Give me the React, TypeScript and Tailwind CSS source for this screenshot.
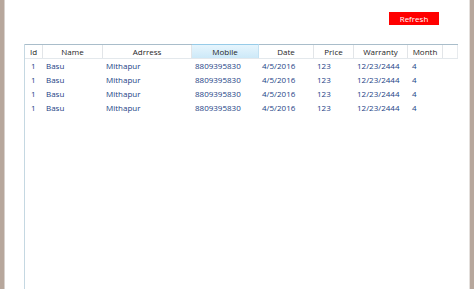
// Order grid window: a Refresh button over a WPF-style data grid.

type Column = {
  key: keyof Row;
  label: string;
  width: string;
};

type Row = {
  id: string;
  name: string;
  address: string;
  mobile: string;
  date: string;
  price: string;
  warranty: string;
  month: string;
};

const COLUMNS: Column[] = [
  { key: "id", label: "Id", width: "w-[18px]" },
  { key: "name", label: "Name", width: "w-[60px]" },
  { key: "address", label: "Adrress", width: "w-[89px]" },
  { key: "mobile", label: "Mobile", width: "w-[67px]" },
  { key: "date", label: "Date", width: "w-[55px]" },
  { key: "price", label: "Price", width: "w-[40px]" },
  { key: "warranty", label: "Warranty", width: "w-[54px]" },
  { key: "month", label: "Month", width: "w-[35px]" },
];

const ROW: Row = {
  id: "1",
  name: "Basu",
  address: "Mithapur",
  mobile: "8809395830",
  date: "4/5/2016",
  price: "123",
  warranty: "12/23/2444",
  month: "4",
};

const ROWS: Row[] = [ROW, ROW, ROW, ROW];

export default function App() {
  return (
    <div
      className="flex h-[289px] w-[474px] bg-[#b7a79c]"
      style={{ fontFamily: '"Open Sans", "Noto Sans", sans-serif' }}
    >
      <div className="ml-[4px] w-px bg-[#d8d2ce]" />
      <div className="flex flex-1 flex-col bg-white">
        {/* Toolbar */}
        <div className="flex h-[44px] items-start justify-end pr-[30px] pt-[12px]">
          <button className="flex h-[13px] w-[50px] items-center justify-center bg-[#ff0000] text-[8px] leading-none text-white">
            Refresh
          </button>
        </div>

        {/* Grid */}
        <div className="ml-[19px] mr-[11px] flex flex-1 flex-col border-l border-[#c5d8e2]">
          <div className="flex h-[15px] border-y border-t-[#a9bdca] border-b-[#e3e8ec] text-[8px] text-[#1e1e1e]">
            {COLUMNS.map((col) => (
              <div
                key={col.key}
                className={
                  col.key === "mobile"
                    ? `${col.width} flex items-center justify-center border-r border-[#c3e2f3] bg-gradient-to-b from-[#e6f5fd] to-[#cde9f8] border-t border-t-[#96cbe8] -mt-px`
                    : `${col.width} flex items-center justify-center border-r border-[#e2e5e8]`
                }
              >
                {col.label}
              </div>
            ))}
            <div className="w-[15px] border-r border-[#e8ebee]" />
          </div>

          {ROWS.map((row, i) => (
            <div key={i} className="flex h-[14px] items-center text-[8px] text-[#1c3f86]">
              {COLUMNS.map((col) => (
                <div
                  key={col.key}
                  className={`${col.width} ${col.key === "id" ? "pl-[6px]" : "pl-[3px]"} ${col.key === "month" ? "pl-[4px]" : ""}`}
                >
                  {row[col.key]}
                </div>
              ))}
            </div>
          ))}
        </div>
      </div>
      <div className="w-px bg-[#e4e0dd]" />
      <div className="w-[4px]" />
    </div>
  );
}
